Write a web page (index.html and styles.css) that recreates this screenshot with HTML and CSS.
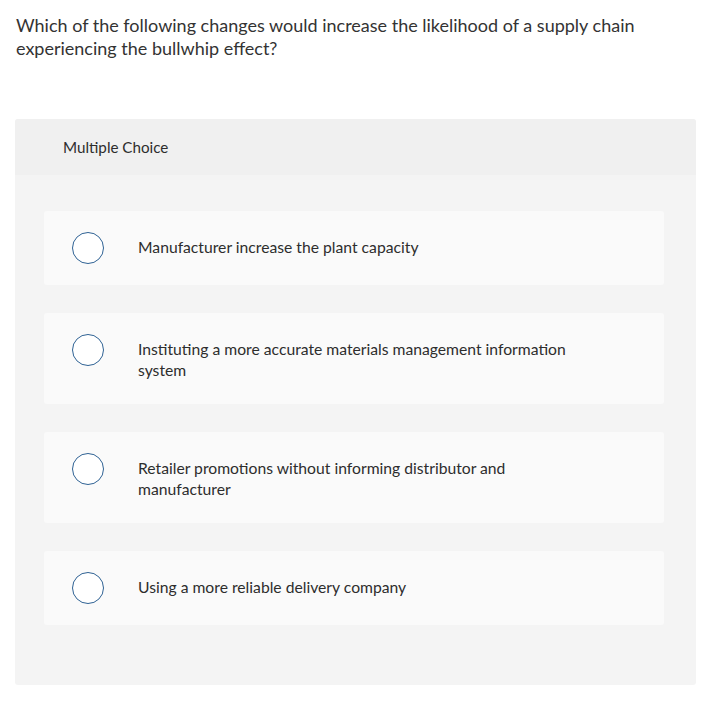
FILE: index.html
```html
<!DOCTYPE html>
<html lang="en">
<head>
<meta charset="utf-8">
<title>Multiple Choice</title>
<link rel="stylesheet" href="styles.css">
</head>
<body>
<div class="page">
  <p class="question">Which of the following changes would increase the likelihood of a supply chain experiencing the bullwhip effect?</p>
  <section class="panel">
    <header class="panel-header">Multiple Choice</header>
    <div class="options">
      <label class="option">
        <span class="radio"></span>
        <span class="option-text">Manufacturer increase the plant capacity</span>
      </label>
      <label class="option">
        <span class="radio"></span>
        <span class="option-text">Instituting a more accurate materials management information system</span>
      </label>
      <label class="option">
        <span class="radio"></span>
        <span class="option-text">Retailer promotions without informing distributor and manufacturer</span>
      </label>
      <label class="option">
        <span class="radio"></span>
        <span class="option-text">Using a more reliable delivery company</span>
      </label>
    </div>
  </section>
</div>
</body>
</html>
```

FILE: styles.css
```css
html, body {
  margin: 0;
  padding: 0;
  background: #ffffff;
}

body {
  font-family: Lato, "Liberation Sans", sans-serif;
  color: #2d2d2d;
}

.page {
  width: 681px;
  padding: 14px 15px 0 15px;
}

.question {
  margin: 0 0 0 1px;
  font-size: 18px;
  line-height: 23px;
  color: #333333;
}

.panel {
  margin-top: 59px;
  background: #f4f4f4;
  border-radius: 3px;
  overflow: hidden;
  padding-bottom: 60px;
}

.panel-header {
  height: 56px;
  background: #f0f0f0;
  display: flex;
  align-items: center;
  padding-left: 48px;
  font-size: 15.2px;
  color: #2d2d2d;
}

.options {
  display: flex;
  flex-direction: column;
  gap: 28px;
  padding: 36px 32px 0 29px;
}

.option {
  display: flex;
  align-items: flex-start;
  background: #fafafa;
  border-radius: 3px;
  padding: 21px 24px 21px 28px;
}

.radio {
  flex: 0 0 auto;
  box-sizing: border-box;
  width: 32px;
  height: 32px;
  border: 1.5px solid #2f6294;
  border-radius: 50%;
  background: #ffffff;
}

.option-text {
  margin: 5px 0 2px 34px;
  max-width: 440px;
  font-size: 15.7px;
  line-height: 21px;
  color: #2d2d2d;
}
```
